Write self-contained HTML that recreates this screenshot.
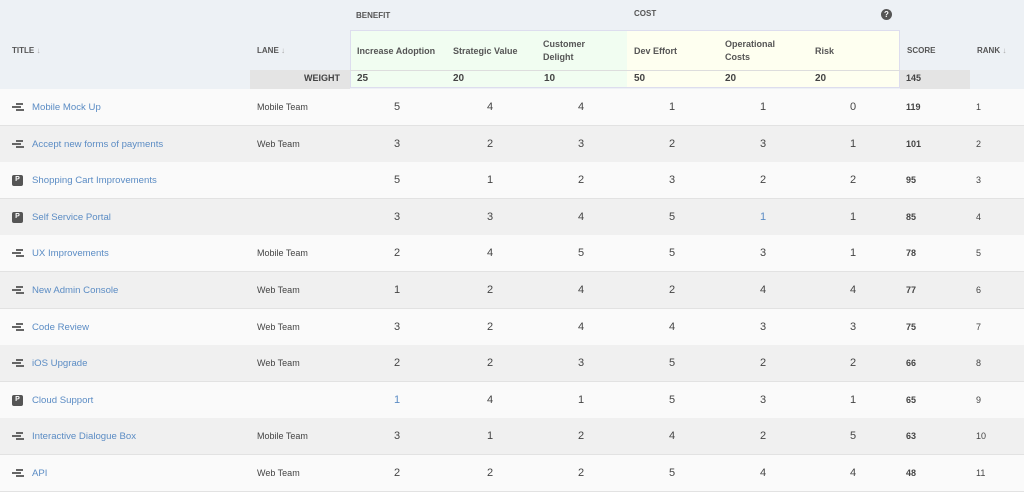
<!DOCTYPE html>
<html><head><meta charset="utf-8"><style>
*{margin:0;padding:0;box-sizing:border-box}
body{width:1024px;height:492px;overflow:hidden;background:#fafafa;font-family:"Liberation Sans",Arial,sans-serif;position:relative;color:#444}
.hdr{position:absolute;left:0;top:0;width:1024px;height:89px;background:#edf1f5}
.a{position:absolute;white-space:nowrap}
.h{font-size:8px;font-weight:bold;color:#555}
.sub{font-size:9px;font-weight:bold;color:#555;line-height:13px}
.w{font-size:10px;font-weight:bold;color:#444;top:73px}
.row{position:absolute;left:0;width:1024px;height:37px;border-bottom:1px solid #e2e2e2;font-size:10px}
.row.e{background:#f0f0f0}.row.o{background:#fafafa}
.row span{position:absolute;top:12px;white-space:nowrap}
.t{left:32px;color:#5b8cc4;font-size:9.6px;top:13px!important}
.l{left:257px;color:#444;font-size:9px;top:13px!important}
.n{width:20px;text-align:center;margin-left:-10px;color:#444;font-size:11px}
.s{left:906px;font-size:9px;font-weight:bold;color:#444;top:13px!important}
.r{left:976px;font-size:9px;color:#444;top:13px!important}
.ic{position:absolute;left:12px;top:13px;width:12px;height:10px}
.g i{position:absolute;height:2px;background:#666}
.p{background:#555;border-radius:2px;color:#fff;font-size:7px;font-weight:bold;text-align:center;line-height:10px;height:11px;width:11px}
</style></head><body>
<div class="hdr"></div>
<div class="a" style="left:350px;top:30px;width:277px;height:58px;background:#f1fdf1;border:1px solid #dde;border-right:none"></div>
<div class="a" style="left:627px;top:30px;width:273px;height:58px;background:#fefff0;border:1px solid #dde;border-left:none"></div>
<div class="a" style="left:350px;top:70px;width:550px;height:1px;background:#ddd"></div>
<div class="a" style="left:250px;top:70px;width:100px;height:19px;background:#e4e4e4"></div>
<div class="a" style="left:900px;top:70px;width:70px;height:19px;background:#e4e4e4"></div>
<div class="a h" style="left:356px;top:11px">BENEFIT</div>
<div class="a h" style="left:634px;top:9px">COST</div>
<div class="a" style="left:881px;top:9px;width:11px;height:11px;border-radius:50%;background:#555;color:#fff;font-size:8px;font-weight:bold;text-align:center;line-height:11px">?</div>
<div class="a h" style="left:12px;top:46px">TITLE <span style="color:#aaa">↓</span></div>
<div class="a h" style="left:257px;top:46px">LANE <span style="color:#aaa">↓</span></div>
<div class="a sub" style="left:357px;top:45px">Increase Adoption</div>
<div class="a sub" style="left:453px;top:45px">Strategic Value</div>
<div class="a sub" style="left:543px;top:38px">Customer<br>Delight</div>
<div class="a sub" style="left:634px;top:45px">Dev Effort</div>
<div class="a sub" style="left:725px;top:38px">Operational<br>Costs</div>
<div class="a sub" style="left:815px;top:45px">Risk</div>
<div class="a h" style="left:907px;top:46px">SCORE</div>
<div class="a h" style="left:977px;top:46px">RANK <span style="color:#aaa">↓</span></div>
<div class="a w" style="left:304px;font-size:9px">WEIGHT</div>
<div class="a w" style="left:357px">25</div>
<div class="a w" style="left:453px">20</div>
<div class="a w" style="left:544px">10</div>
<div class="a w" style="left:634px">50</div>
<div class="a w" style="left:725px">20</div>
<div class="a w" style="left:815px">20</div>
<div class="a w" style="left:906px;font-size:9px">145</div>

<div class="row o" style="top:89px"><div class="ic g"><i style="left:4px;top:1px;width:7px"></i><i style="left:0;top:4px;width:9px"></i><i style="left:4px;top:7px;width:8px"></i></div><span class="t">Mobile Mock Up</span><span class="l">Mobile Team</span><span class="n" style="left:397px">5</span><span class="n" style="left:490px">4</span><span class="n" style="left:581px">4</span><span class="n" style="left:672px">1</span><span class="n" style="left:763px">1</span><span class="n" style="left:853px">0</span><span class="s">119</span><span class="r">1</span></div>
<div class="row e" style="top:126px"><div class="ic g"><i style="left:4px;top:1px;width:7px"></i><i style="left:0;top:4px;width:9px"></i><i style="left:4px;top:7px;width:8px"></i></div><span class="t">Accept new forms of payments</span><span class="l">Web Team</span><span class="n" style="left:397px">3</span><span class="n" style="left:490px">2</span><span class="n" style="left:581px">3</span><span class="n" style="left:672px">2</span><span class="n" style="left:763px">3</span><span class="n" style="left:853px">1</span><span class="s">101</span><span class="r">2</span></div>
<div class="row o" style="top:162px"><div class="ic p">P</div><span class="t">Shopping Cart Improvements</span><span class="l"></span><span class="n" style="left:397px">5</span><span class="n" style="left:490px">1</span><span class="n" style="left:581px">2</span><span class="n" style="left:672px">3</span><span class="n" style="left:763px">2</span><span class="n" style="left:853px">2</span><span class="s">95</span><span class="r">3</span></div>
<div class="row e" style="top:199px"><div class="ic p">P</div><span class="t">Self Service Portal</span><span class="l"></span><span class="n" style="left:397px">3</span><span class="n" style="left:490px">3</span><span class="n" style="left:581px">4</span><span class="n" style="left:672px">5</span><span class="n" style="left:763px;color:#5b8cc4">1</span><span class="n" style="left:853px">1</span><span class="s">85</span><span class="r">4</span></div>
<div class="row o" style="top:235px"><div class="ic g"><i style="left:4px;top:1px;width:7px"></i><i style="left:0;top:4px;width:9px"></i><i style="left:4px;top:7px;width:8px"></i></div><span class="t">UX Improvements</span><span class="l">Mobile Team</span><span class="n" style="left:397px">2</span><span class="n" style="left:490px">4</span><span class="n" style="left:581px">5</span><span class="n" style="left:672px">5</span><span class="n" style="left:763px">3</span><span class="n" style="left:853px">1</span><span class="s">78</span><span class="r">5</span></div>
<div class="row e" style="top:272px"><div class="ic g"><i style="left:4px;top:1px;width:7px"></i><i style="left:0;top:4px;width:9px"></i><i style="left:4px;top:7px;width:8px"></i></div><span class="t">New Admin Console</span><span class="l">Web Team</span><span class="n" style="left:397px">1</span><span class="n" style="left:490px">2</span><span class="n" style="left:581px">4</span><span class="n" style="left:672px">2</span><span class="n" style="left:763px">4</span><span class="n" style="left:853px">4</span><span class="s">77</span><span class="r">6</span></div>
<div class="row o" style="top:309px"><div class="ic g"><i style="left:4px;top:1px;width:7px"></i><i style="left:0;top:4px;width:9px"></i><i style="left:4px;top:7px;width:8px"></i></div><span class="t">Code Review</span><span class="l">Web Team</span><span class="n" style="left:397px">3</span><span class="n" style="left:490px">2</span><span class="n" style="left:581px">4</span><span class="n" style="left:672px">4</span><span class="n" style="left:763px">3</span><span class="n" style="left:853px">3</span><span class="s">75</span><span class="r">7</span></div>
<div class="row e" style="top:345px"><div class="ic g"><i style="left:4px;top:1px;width:7px"></i><i style="left:0;top:4px;width:9px"></i><i style="left:4px;top:7px;width:8px"></i></div><span class="t">iOS Upgrade</span><span class="l">Web Team</span><span class="n" style="left:397px">2</span><span class="n" style="left:490px">2</span><span class="n" style="left:581px">3</span><span class="n" style="left:672px">5</span><span class="n" style="left:763px">2</span><span class="n" style="left:853px">2</span><span class="s">66</span><span class="r">8</span></div>
<div class="row o" style="top:382px"><div class="ic p">P</div><span class="t">Cloud Support</span><span class="l"></span><span class="n" style="left:397px;color:#5b8cc4">1</span><span class="n" style="left:490px">4</span><span class="n" style="left:581px">1</span><span class="n" style="left:672px">5</span><span class="n" style="left:763px">3</span><span class="n" style="left:853px">1</span><span class="s">65</span><span class="r">9</span></div>
<div class="row e" style="top:418px"><div class="ic g"><i style="left:4px;top:1px;width:7px"></i><i style="left:0;top:4px;width:9px"></i><i style="left:4px;top:7px;width:8px"></i></div><span class="t">Interactive Dialogue Box</span><span class="l">Mobile Team</span><span class="n" style="left:397px">3</span><span class="n" style="left:490px">1</span><span class="n" style="left:581px">2</span><span class="n" style="left:672px">4</span><span class="n" style="left:763px">2</span><span class="n" style="left:853px">5</span><span class="s">63</span><span class="r">10</span></div>
<div class="row o" style="top:455px"><div class="ic g"><i style="left:4px;top:1px;width:7px"></i><i style="left:0;top:4px;width:9px"></i><i style="left:4px;top:7px;width:8px"></i></div><span class="t">API</span><span class="l">Web Team</span><span class="n" style="left:397px">2</span><span class="n" style="left:490px">2</span><span class="n" style="left:581px">2</span><span class="n" style="left:672px">5</span><span class="n" style="left:763px">4</span><span class="n" style="left:853px">4</span><span class="s">48</span><span class="r">11</span></div>
</body></html>
